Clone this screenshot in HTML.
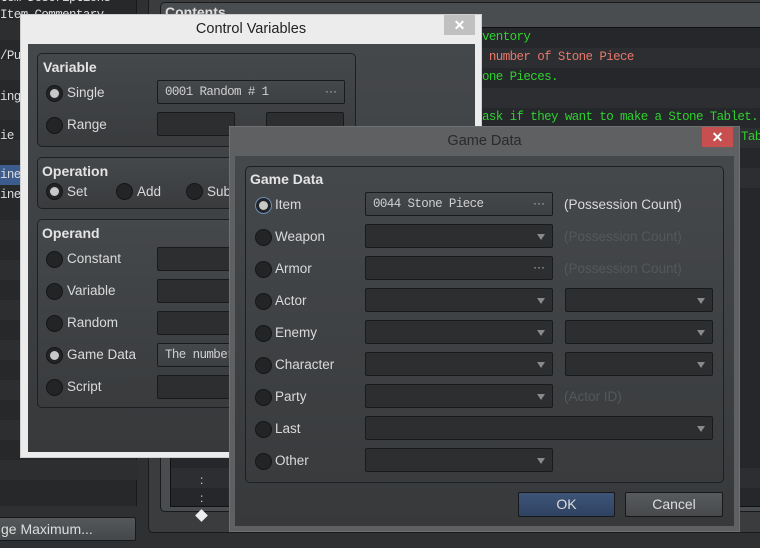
<!DOCTYPE html>
<html><head><style>
*{box-sizing:border-box;margin:0;padding:0}
body{width:760px;height:548px;overflow:hidden;background:#2e3032;font-family:"Liberation Sans",sans-serif;position:relative;font-size:13px;color:#d8d8d8}
.a{position:absolute}
.mono{font-family:"Liberation Mono",monospace;font-size:12.5px;letter-spacing:-0.6px}
.row{position:absolute;left:0;width:137px;height:20px}
.grp{position:absolute;border:1px solid #1e1f20;border-radius:5px;background:linear-gradient(#45484b,#393b3d)}
.gt{position:absolute;font-weight:bold;font-size:14px;color:#e4e4e4}
.rb{position:absolute;width:17px;height:17px;border-radius:50%;background:#222426;border:1px solid #151617}
.rb.on::after{content:"";position:absolute;left:3px;top:3px;width:9px;height:9px;border-radius:50%;background:#c8c8c8}
.lb{position:absolute;font-size:13.5px;color:#dadada}
.fd{position:absolute;height:24px;background:#2c2e30;border:1px solid #191a1b;border-radius:2px}
.fd.dd::after{content:"";position:absolute;right:7px;top:9px;border-left:4px solid transparent;border-right:4px solid transparent;border-top:6px solid #8a8a8a}
.fd .t{position:absolute;left:7px;top:4px;font-family:"Liberation Mono",monospace;font-size:12.5px;letter-spacing:-0.6px;color:#cfcfcf}
.fd .el{position:absolute;right:7px;top:3px;color:#bbb;font-size:12px}
.fd.lt{background:linear-gradient(#45484b,#3d4043)}
.code{position:absolute;left:482px;font-family:"Liberation Mono",monospace;font-size:12.5px;letter-spacing:-0.6px;color:#2fd12f}
</style></head><body>
<div class="a" style="left:0;top:0;width:137px;height:506px;background:#26282a;border-right:1px solid #1a1a1a"></div>
<div class="row" style="top:20px;background:#2c2e30"></div>
<div class="row" style="top:60px;background:#2c2e30"></div>
<div class="row" style="top:100px;background:#2c2e30"></div>
<div class="row" style="top:140px;background:#2c2e30"></div>
<div class="row" style="top:165px;background:#3b5c8c"></div>
<div class="row" style="top:220px;background:#2c2e30"></div>
<div class="row" style="top:260px;background:#2c2e30"></div>
<div class="row" style="top:300px;background:#2c2e30"></div>
<div class="row" style="top:340px;background:#2c2e30"></div>
<div class="row" style="top:380px;background:#2c2e30"></div>
<div class="row" style="top:420px;background:#2c2e30"></div>
<div class="row" style="top:460px;background:#2c2e30"></div>
<div class="a mono" style="left:0;top:-9px;color:#ddd">tem Descriptions</div>
<div class="a mono" style="left:0;top:8px;color:#ddd">Item Commentary</div>
<div class="a mono" style="left:0;top:49px;color:#ddd">/Pu</div>
<div class="a mono" style="left:0;top:90px;color:#ddd">ing</div>
<div class="a mono" style="left:0;top:129px;color:#ddd">ie (</div>
<div class="a mono" style="left:0;top:168px;color:#ddd">iner</div>
<div class="a mono" style="left:0;top:188px;color:#ddd">iner</div>
<div class="a" style="left:-4px;top:517px;width:140px;height:24px;background:linear-gradient(#55585b,#45484a);border:1px solid #1a1a1a;border-radius:2px;font-size:14px;color:#ddd;padding:3px 0 0 4px">ge Maximum...</div>
<div class="a" style="left:148px;top:-4px;width:620px;height:537px;border:1px solid #1a1a1a;border-radius:5px;background:#3a3c3e"></div>
<div class="a" style="left:160px;top:2px;width:610px;height:510px;border:1px solid #1a1a1a;border-radius:5px;background:#4a4d50"></div>
<div class="a" style="left:165px;top:4px;font-weight:bold;font-size:14px;color:#ddd">Contents</div>
<div class="a" style="left:170px;top:27px;width:600px;height:480px;background:#25272a;border:1px solid #111"></div>
<div class="a" style="left:171px;top:48px;width:600px;height:20px;background:#2c2e31"></div>
<div class="a" style="left:171px;top:88px;width:600px;height:20px;background:#2c2e31"></div>
<div class="a" style="left:171px;top:128px;width:600px;height:20px;background:#2c2e31"></div>
<div class="a" style="left:171px;top:168px;width:600px;height:20px;background:#2c2e31"></div>
<div class="a" style="left:171px;top:468px;width:600px;height:20px;background:#2c2e31"></div>
<div class="code" style="top:30px">ventory</div>
<div class="code" style="top:50px;color:#e8786a">&nbsp;number of Stone Piece</div>
<div class="code" style="top:70px">one Pieces.</div>
<div class="code" style="top:110px">ask if they want to make a Stone Tablet.</div>
<div class="code" style="left:741px;top:130px">Tab</div>
<div class="a" style="left:200px;top:473px;color:#ddd;font-size:12px">:</div>
<div class="a" style="left:200px;top:491px;color:#ddd;font-size:12px">:</div>
<div class="a" style="left:197px;top:511px;width:9px;height:9px;background:#eee;transform:rotate(45deg)"></div>

<div class="a" style="left:20px;top:14px;width:462px;height:444px;background:#ececec;border:1px solid #cfcfcf"></div>
<div class="a" style="left:20px;top:21px;width:462px;text-align:center;font-size:14.5px;color:#222">Control Variables</div>
<div class="a" style="left:444px;top:15px;width:31px;height:20px;background:#c0c0c0;color:#fff;text-align:center;font-size:14px;font-weight:bold;line-height:20px">✕</div>
<div class="a" style="left:28px;top:44px;width:447px;height:408px;background:linear-gradient(#45484b,#37393b)"></div>
<div class="grp" style="left:37px;top:53px;width:319px;height:94px"></div>
<div class="gt" style="left:43px;top:59px">Variable</div>
<div class="rb on" style="left:46px;top:85px"></div><div class="lb" style="left:67px;top:85px">Single</div>
<div class="fd lt" style="left:157px;top:80px;width:188px"><span class="t">0001 Random # 1</span><span class="el">···</span></div>
<div class="rb" style="left:46px;top:117px"></div><div class="lb" style="left:67px;top:117px">Range</div>
<div class="fd" style="left:157px;top:112px;width:78px"></div>
<div class="fd" style="left:266px;top:112px;width:78px"></div>
<div class="grp" style="left:37px;top:157px;width:319px;height:52px"></div>
<div class="gt" style="left:42px;top:163px">Operation</div>
<div class="rb on" style="left:46px;top:183px"></div><div class="lb" style="left:67px;top:184px">Set</div>
<div class="rb" style="left:116px;top:183px"></div><div class="lb" style="left:137px;top:184px">Add</div>
<div class="rb" style="left:186px;top:183px"></div><div class="lb" style="left:207px;top:184px">Sub</div>
<div class="grp" style="left:37px;top:219px;width:319px;height:189px"></div>
<div class="gt" style="left:42px;top:225px">Operand</div>
<div class="rb" style="left:46px;top:251px"></div><div class="lb" style="left:67px;top:251px">Constant</div>
<div class="fd" style="left:157px;top:247px;width:100px"></div>
<div class="rb" style="left:46px;top:283px"></div><div class="lb" style="left:67px;top:283px">Variable</div>
<div class="fd" style="left:157px;top:279px;width:100px"></div>
<div class="rb" style="left:46px;top:315px"></div><div class="lb" style="left:67px;top:315px">Random</div>
<div class="fd" style="left:157px;top:311px;width:100px"></div>
<div class="rb on" style="left:46px;top:347px"></div><div class="lb" style="left:67px;top:347px">Game Data</div>
<div class="fd lt" style="left:157px;top:343px;width:100px"><span class="t">The number</span></div>
<div class="rb" style="left:46px;top:379px"></div><div class="lb" style="left:67px;top:379px">Script</div>
<div class="fd" style="left:157px;top:375px;width:100px"></div>

<div class="a" style="left:229px;top:126px;width:511px;height:406px;background:#5e6062;border:1px solid #6e7072"></div>
<div class="a" style="left:229px;top:133px;width:511px;text-align:center;font-size:14.5px;color:#2a2a2a">Game Data</div>
<div class="a" style="left:702px;top:127px;width:31px;height:20px;background:#c74f4f;color:#fff;text-align:center;font-size:14px;font-weight:bold;line-height:20px">✕</div>
<div class="a" style="left:235px;top:156px;width:499px;height:370px;background:linear-gradient(#45484b,#37393b)"></div>
<div class="grp" style="left:245px;top:166px;width:479px;height:317px"></div>
<div class="gt" style="left:250px;top:171px">Game Data</div>
<div class="rb on" style="left:255px;top:197px;border-color:#6b8fb8"></div><div class="lb" style="left:275px;top:197px">Item</div>
<div class="fd lt" style="left:365px;top:192px;width:188px"><span class="t">0044 Stone Piece</span><span class="el">···</span></div>
<div class="lb" style="left:564px;top:197px">(Possession Count)</div>
<div class="rb" style="left:255px;top:229px"></div><div class="lb" style="left:275px;top:229px">Weapon</div>
<div class="fd dd" style="left:365px;top:224px;width:188px"></div>
<div class="lb" style="left:564px;top:229px;color:#55585b">(Possession Count)</div>
<div class="rb" style="left:255px;top:261px"></div><div class="lb" style="left:275px;top:261px">Armor</div>
<div class="fd" style="left:365px;top:256px;width:188px"><span class="el">···</span></div>
<div class="lb" style="left:564px;top:261px;color:#55585b">(Possession Count)</div>
<div class="rb" style="left:255px;top:293px"></div><div class="lb" style="left:275px;top:293px">Actor</div>
<div class="fd dd" style="left:365px;top:288px;width:188px"></div><div class="fd dd" style="left:565px;top:288px;width:148px"></div>
<div class="rb" style="left:255px;top:325px"></div><div class="lb" style="left:275px;top:325px">Enemy</div>
<div class="fd dd" style="left:365px;top:320px;width:188px"></div><div class="fd dd" style="left:565px;top:320px;width:148px"></div>
<div class="rb" style="left:255px;top:357px"></div><div class="lb" style="left:275px;top:357px">Character</div>
<div class="fd dd" style="left:365px;top:352px;width:188px"></div><div class="fd dd" style="left:565px;top:352px;width:148px"></div>
<div class="rb" style="left:255px;top:389px"></div><div class="lb" style="left:275px;top:389px">Party</div>
<div class="fd dd" style="left:365px;top:384px;width:188px"></div>
<div class="lb" style="left:564px;top:389px;color:#55585b">(Actor ID)</div>
<div class="rb" style="left:255px;top:421px"></div><div class="lb" style="left:275px;top:421px">Last</div>
<div class="fd dd" style="left:365px;top:416px;width:348px"></div>
<div class="rb" style="left:255px;top:453px"></div><div class="lb" style="left:275px;top:453px">Other</div>
<div class="fd dd" style="left:365px;top:448px;width:188px"></div>
<div class="a" style="left:518px;top:492px;width:97px;height:25px;background:linear-gradient(#3e5578,#2f4262);border:1px solid #16181a;border-radius:2px;text-align:center;line-height:23px;font-size:14px;color:#ddd">OK</div>
<div class="a" style="left:625px;top:492px;width:98px;height:25px;background:linear-gradient(#585b5e,#47494b);border:1px solid #16181a;border-radius:2px;text-align:center;line-height:23px;font-size:14px;color:#ddd">Cancel</div>
</body></html>
